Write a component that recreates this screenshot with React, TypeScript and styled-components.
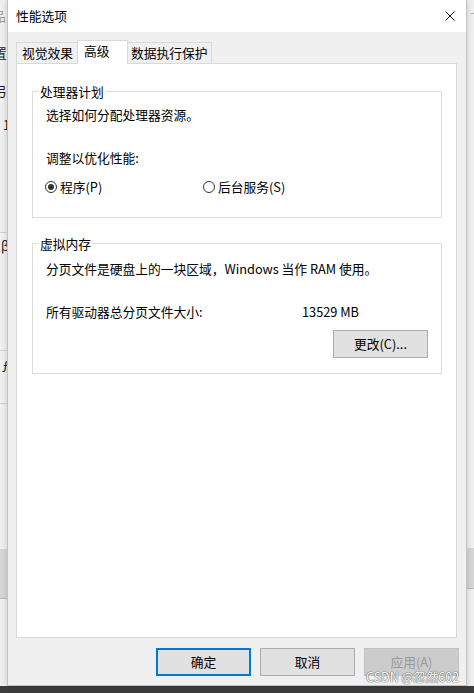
import React from "react";
import styled, { createGlobalStyle } from "styled-components";

const FONT = `"Noto Sans CJK SC", "Noto Sans", sans-serif`;

const GlobalStyle = createGlobalStyle`
  html, body {
    margin: 0;
    padding: 0;
  }
  body {
    width: 474px;
    height: 693px;
    overflow: hidden;
    background: #3c3c3c;
    font-family: ${FONT};
  }
`;

const Desktop = styled.div`
  position: relative;
  width: 474px;
  height: 693px;
  overflow: hidden;
  background: #3c3c3c;
  font-family: ${FONT};
  color: #000;
`;

/* window lying behind the dialog: only its edges stay visible */
const BackWindow = styled.div`
  position: absolute;
  inset: 0 0 7px 0;
  display: flex;
  justify-content: space-between;
  background: #f0f0f0;
`;

const EdgeColumn = styled.div`
  width: 7px;
  display: flex;
  flex-direction: column;
  overflow: hidden;
`;

const EdgeGlyph = styled.span<{ $top: number; $shift: number; $tone?: string }>`
  flex: none;
  display: block;
  margin-top: ${(p) => p.$top}px;
  margin-left: ${(p) => p.$shift}px;
  height: 14px;
  line-height: 14px;
  font-size: 12.75px;
  white-space: nowrap;
  color: ${(p) => p.$tone ?? "#1a1a1a"};
`;

const EdgeRule = styled.div<{ $top: number }>`
  flex: none;
  margin-top: ${(p) => p.$top}px;
  height: 1px;
  background: #d2d2d2;
`;

const EdgeBlock = styled.div<{ $top: number; $h: number }>`
  flex: none;
  margin-top: ${(p) => p.$top}px;
  height: ${(p) => p.$h}px;
  background: #d6d6d6;
  border-bottom: 1px solid #b9b9b9;
`;

/* the performance options dialog */
const Dialog = styled.section`
  position: absolute;
  left: 7px;
  top: 0;
  width: 460px;
  height: 686px;
  box-sizing: border-box;
  display: flex;
  flex-direction: column;
  background: #f0f0f0;
  border: 1px solid #c4c4c4;
  border-top: none;
  box-shadow: 0 0 6px rgba(0, 0, 0, 0.18);
`;

const TitleBar = styled.header`
  flex: none;
  height: 32px;
  display: flex;
  align-items: center;
  justify-content: space-between;
  padding: 0 11px 0 8px;
  background: #ffffff;
  font-size: 12.75px;
  line-height: 16px;
`;

const CloseButton = styled.span`
  display: flex;
  width: 10px;
  height: 10px;
`;

const Body = styled.div`
  flex: 1;
  display: flex;
  flex-direction: column;
  padding: 8px 9px 9px 8px;
`;

const TabStrip = styled.div`
  flex: none;
  height: 23px;
  display: flex;
  align-items: flex-end;
  position: relative;
  z-index: 1;
`;

const Tab = styled.div<{ $active?: boolean; $w: number; $pad: number }>`
  box-sizing: border-box;
  width: ${(p) => p.$w}px;
  height: ${(p) => (p.$active ? 24 : 21)}px;
  margin-bottom: ${(p) => (p.$active ? -1 : 0)}px;
  margin-left: -1px;
  padding-left: ${(p) => p.$pad}px;
  border: 1px solid #d9d9d9;
  border-bottom: none;
  background: ${(p) => (p.$active ? "#ffffff" : "#f0f0f0")};
  position: relative;
  z-index: ${(p) => (p.$active ? 2 : 1)};
  font-size: 12.75px;
  line-height: 19px;
  white-space: nowrap;

  &:first-child {
    margin-left: 0;
  }
`;

const Panel = styled.div`
  flex: none;
  box-sizing: border-box;
  height: 575px;
  padding: 19px 14px 0 15px;
  background: #ffffff;
  border: 1px solid #d9d9d9;
`;

const Group = styled.fieldset<{ $gap?: number }>`
  margin: ${(p) => p.$gap ?? 0}px 0 0 0;
  padding: 0;
  min-inline-size: 0;
  border: 1px solid #dcdcdc;
`;

const GroupTitle = styled.legend`
  margin-left: 5px;
  padding: 0 2px;
  font-size: 12.75px;
  line-height: 17px;
`;

const GroupBody = styled.div<{ $top: number; $bottom: number }>`
  display: flex;
  flex-direction: column;
  padding: ${(p) => p.$top}px 13px ${(p) => p.$bottom}px 13px;
  font-size: 12.75px;
  line-height: 16px;
`;

const Line = styled.div<{ $gap?: number }>`
  margin-top: ${(p) => p.$gap ?? 0}px;
  height: 16px;
  white-space: nowrap;
`;

const RadioRow = styled.div`
  margin-top: 13px;
  margin-left: -1px;
  display: flex;
  height: 16px;
`;

const RadioOption = styled.label<{ $w?: number }>`
  display: flex;
  align-items: center;
  gap: 3px;
  width: ${(p) => (p.$w ? `${p.$w}px` : "auto")};
  white-space: nowrap;
`;

const RadioMark = styled.span<{ $checked?: boolean }>`
  box-sizing: border-box;
  flex: none;
  width: 12px;
  height: 12px;
  border: 1px solid #333333;
  border-radius: 50%;
  display: flex;
  align-items: center;
  justify-content: center;

  &::after {
    content: "";
    width: 6px;
    height: 6px;
    border-radius: 50%;
    background: ${(p) => (p.$checked ? "#333333" : "transparent")};
  }
`;

const SizeRow = styled.div`
  margin-top: 27px;
  display: flex;
  height: 16px;
  white-space: nowrap;
`;

const SizeLabel = styled.span`
  width: 256px;
`;

const ActionRow = styled.div<{ $gap?: number }>`
  margin-top: ${(p) => p.$gap ?? 0}px;
  display: flex;
  justify-content: flex-end;
  gap: 9px;
`;

const Button = styled.button<{ $kind?: "default" | "plain" | "disabled" }>`
  box-sizing: border-box;
  width: 95px;
  height: 28px;
  padding: 0;
  font-family: ${FONT};
  font-size: 12.75px;
  line-height: 16px;
  color: ${(p) => (p.$kind === "disabled" ? "#9a9a9a" : "#000000")};
  background: ${(p) => (p.$kind === "disabled" ? "#cccccc" : "#e1e1e1")};
  border: ${(p) =>
    p.$kind === "default"
      ? "2px solid #0078d7"
      : p.$kind === "disabled"
      ? "1px solid #c2c2c2"
      : "1px solid #adadad"};
  border-radius: 0;
`;

const Footer = styled.div`
  margin-top: 10px;
  margin-right: -2px;
  display: flex;
  justify-content: flex-end;
  gap: 9px;
`;

const Watermark = styled.span`
  position: absolute;
  left: 366px;
  top: 669px;
  font-size: 12.5px;
  line-height: 16px;
  white-space: nowrap;
  color: #ffffff;
  text-shadow: 0 0 1px #6a6a6a, 0 0 1px #6a6a6a, 0 0 1px #6a6a6a;
`;

export default function App() {
  return (
    <>
      <GlobalStyle />
      <Desktop>
        <BackWindow>
          <EdgeColumn>
            <EdgeGlyph $top={9} $shift={-7} $tone="#9a9a9a">
              品
            </EdgeGlyph>
            <EdgeGlyph $top={23} $shift={-6}>
              置
            </EdgeGlyph>
            <EdgeGlyph $top={24} $shift={-6}>
              弓
            </EdgeGlyph>
            <EdgeGlyph $top={20} $shift={3}>
              1
            </EdgeGlyph>
            <EdgeRule $top={100} />
            <EdgeGlyph $top={6} $shift={1}>
              β
            </EdgeGlyph>
            <EdgeRule $top={97} />
            <EdgeGlyph $top={8} $shift={2}>
              ƒ
            </EdgeGlyph>
            <EdgeRule $top={30} />
            <EdgeBlock $top={145} $h={49} />
          </EdgeColumn>
          <EdgeColumn>
            <EdgeGlyph $top={5} $shift={3} $tone="#a8a8a8">
              –
            </EdgeGlyph>
            <EdgeBlock $top={529} $h={40} />
          </EdgeColumn>
        </BackWindow>

        <Dialog>
          <TitleBar>
            <span>性能选项</span>
            <CloseButton>
              <svg width="10" height="10" viewBox="0 0 10 10">
                <path
                  d="M0.5 0.5 L9.5 9.5 M9.5 0.5 L0.5 9.5"
                  stroke="#111"
                  strokeWidth="1"
                  fill="none"
                />
              </svg>
            </CloseButton>
          </TitleBar>

          <Body>
            <TabStrip>
              <Tab $w={62} $pad={5}>
                视觉效果
              </Tab>
              <Tab $w={51} $pad={6} $active>
                高级
              </Tab>
              <Tab $w={85} $pad={3}>
                数据执行保护
              </Tab>
            </TabStrip>

            <Panel>
              <Group>
                <GroupTitle>处理器计划</GroupTitle>
                <GroupBody $top={7} $bottom={22}>
                  <Line>选择如何分配处理器资源。</Line>
                  <Line $gap={27}>调整以优化性能:</Line>
                  <RadioRow>
                    <RadioOption $w={158}>
                      <RadioMark $checked />
                      程序(P)
                    </RadioOption>
                    <RadioOption>
                      <RadioMark />
                      后台服务(S)
                    </RadioOption>
                  </RadioRow>
                </GroupBody>
              </Group>

              <Group $gap={17}>
                <GroupTitle>虚拟内存</GroupTitle>
                <GroupBody $top={9} $bottom={15}>
                  <Line>分页文件是硬盘上的一块区域，Windows 当作 RAM 使用。</Line>
                  <SizeRow>
                    <SizeLabel>所有驱动器总分页文件大小:</SizeLabel>
                    <span>13529 MB</span>
                  </SizeRow>
                  <ActionRow $gap={10}>
                    <Button $kind="plain">更改(C)...</Button>
                  </ActionRow>
                </GroupBody>
              </Group>
            </Panel>

            <Footer>
              <Button $kind="default">确定</Button>
              <Button $kind="plain">取消</Button>
              <Button $kind="disabled">应用(A)</Button>
            </Footer>
          </Body>
        </Dialog>

        <Watermark>CSDN @忽然602</Watermark>
      </Desktop>
    </>
  );
}
